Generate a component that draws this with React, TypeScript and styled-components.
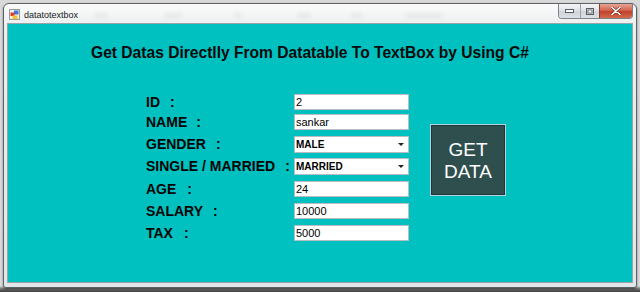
import React from "react";
import styled, { createGlobalStyle } from "styled-components";

const Global = createGlobalStyle`
  html, body { margin: 0; padding: 0; }
  body {
    width: 640px;
    height: 292px;
    overflow: hidden;
    background: linear-gradient(#d9d9d9 0, #d9d9d9 286px, #6d6d6d 289px, #3d3d3d 292px);
    font-family: "Liberation Sans", Arial, sans-serif;
  }
`;

const Window = styled.div`
  margin: 3px 3px 0 3px;
  width: 634px;
  height: 285px;
  box-sizing: border-box;
  border: 1px solid #5e6166;
  border-radius: 6px 6px 3px 3px;
  background: linear-gradient(#fbfbfb 0, #eceeef 22px, #e3e6e8 100%);
  display: flex;
  flex-direction: column;
  box-shadow: 0 1px 2px rgba(0,0,0,0.5);
`;

const TitleBar = styled.div`
  height: 19px;
  display: flex;
  align-items: flex-start;
  padding-left: 5px;
`;

const AppIcon = styled.svg`
  width: 11px;
  height: 11px;
  margin-top: 5px;
  flex: none;
`;

const Title = styled.span`
  margin-left: 4px;
  margin-top: 6px;
  font-size: 9px;
  line-height: 11px;
  color: #1b1b1b;
`;

const Blur = styled.span<{ $w: number; $ml: number }>`
  width: ${(p) => p.$w}px;
  height: 5px;
  margin-left: ${(p) => p.$ml}px;
  margin-top: 9px;
  border-radius: 3px;
  background: rgba(120, 120, 120, 0.1);
  filter: blur(2px);
`;

const Caption = styled.div`
  margin-left: auto;
  margin-right: 3px;
  display: flex;
  height: 14px;
  border: 1px solid #7b8089;
  border-top: none;
  border-radius: 0 0 4px 4px;
  overflow: hidden;
`;

const CapBtn = styled.div<{ $w: number; $close?: boolean }>`
  width: ${(p) => p.$w}px;
  height: 14px;
  display: flex;
  align-items: center;
  justify-content: center;
  border-left: ${(p) => (p.$close ? "1px solid #8d3a2e" : "1px solid #9ea3aa")};
  &:first-child { border-left: none; }
  background: ${(p) =>
    p.$close
      ? "linear-gradient(#e8a595 0, #d4644f 45%, #c2412b 55%, #d36a4d 100%)"
      : "linear-gradient(#f4f5f7 0, #e1e4e8 45%, #cfd4da 55%, #dde1e5 100%)"};
`;

const Client = styled.div`
  flex: 1;
  margin: 0 3px 4px 3px;
  background: #00c0c0;
  border: 1px solid #9aa3a8;
  padding: 20px 0 0 83px;
`;

const Heading = styled.div`
  font-size: 15.6px;
  line-height: 17px;
  font-weight: 700;
  color: #0a0a0a;
`;

const Form = styled.div`
  margin-top: 33px;
  margin-left: 55px;
  display: grid;
  grid-template-columns: 148px 115px auto;
  grid-template-rows: 20px 22px 22px 23px 22px 22px 16px;
`;

const Label = styled.div<{ $row: number }>`
  grid-column: 1;
  grid-row: ${(p) => p.$row};
  display: flex;
  font-size: 14px;
  line-height: 18px;
  font-weight: 700;
  color: #050505;
  white-space: pre;
  margin-top: -1px;
`;

const Colon = styled.span<{ $gap: number }>`
  margin-left: ${(p) => p.$gap}px;
`;

const TextBox = styled.div<{ $row: number }>`
  grid-column: 2;
  grid-row: ${(p) => p.$row};
  align-self: start;
  box-sizing: border-box;
  height: 16px;
  background: #fff;
  border: 1px solid #b9bcc1;
  padding-left: 1px;
  font-size: 11px;
  line-height: 14px;
  color: #000;
`;

const ComboBox = styled(TextBox)`
  height: 17px;
  line-height: 15px;
  font-size: 10px;
  font-weight: 700;
  display: flex;
  align-items: center;
  justify-content: space-between;
  padding-right: 4px;
`;

const Arrow = styled.span`
  width: 0;
  height: 0;
  border-left: 3px solid transparent;
  border-right: 3px solid transparent;
  border-top: 3px solid #222;
`;

const GetButton = styled.div`
  grid-column: 3;
  grid-row: 1 / span 7;
  align-self: start;
  margin-top: 30px;
  margin-left: 21px;
  width: 76px;
  height: 72px;
  box-sizing: border-box;
  background: #2f4f4f;
  border: 1px solid #b3d2de;
  box-shadow: inset 0 0 0 1px #1f3838;
  display: flex;
  flex-direction: column;
  align-items: center;
  justify-content: center;
  padding-top: 2px;
  color: #fff;
  font-size: 19px;
  line-height: 22px;
`;

const fields: { label: string; gap: number; value: string; combo?: boolean }[] = [
  { label: "ID", gap: 10, value: "2" },
  { label: "NAME", gap: 9, value: "sankar" },
  { label: "GENDER", gap: 10, value: "MALE", combo: true },
  { label: "SINGLE / MARRIED", gap: 10, value: "MARRIED", combo: true },
  { label: "AGE", gap: 11, value: "24" },
  { label: "SALARY", gap: 10, value: "10000" },
  { label: "TAX", gap: 11, value: "5000" },
];

export default function App() {
  return (
    <>
      <Global />
      <Window>
        <TitleBar>
          <AppIcon viewBox="0 0 11 11">
            <rect x="0.5" y="0.5" width="10" height="10" fill="#f2f2f2" stroke="#9a9a9a" />
            <rect x="5" y="1.5" width="4.5" height="4" fill="#3d7bd9" />
            <rect x="1.5" y="3.5" width="4" height="3.5" fill="#e03a2a" />
            <rect x="3.5" y="6.5" width="5" height="3.5" fill="#f2c230" />
          </AppIcon>
          <Title>datatotextbox</Title>
          <Blur $w={14} $ml={16} />
          <Blur $w={18} $ml={56} />
          <Blur $w={8} $ml={52} />
          <Blur $w={14} $ml={55} />
          <Blur $w={12} $ml={40} />
          <Blur $w={38} $ml={42} />
          <Caption>
            <CapBtn $w={21}>
              <svg width="9" height="4" viewBox="0 0 9 4">
                <rect x="0.5" y="0.5" width="8" height="3" fill="#fff" stroke="#5a5f66" />
              </svg>
            </CapBtn>
            <CapBtn $w={18}>
              <svg width="8" height="7" viewBox="0 0 8 7">
                <rect x="0.5" y="0.5" width="7" height="6" fill="none" stroke="#5a5f66" />
                <rect x="2" y="2" width="4" height="3" fill="#fff" stroke="#5a5f66" strokeWidth="0.8" />
              </svg>
            </CapBtn>
            <CapBtn $w={32} $close>
              <svg width="10" height="8" viewBox="0 0 10 8">
                <path d="M1 0.5 L9 7.5 M9 0.5 L1 7.5" stroke="#4a1c14" strokeWidth="2.6" strokeLinecap="round" />
                <path d="M1 0.5 L9 7.5 M9 0.5 L1 7.5" stroke="#fff" strokeWidth="1.6" strokeLinecap="round" />
              </svg>
            </CapBtn>
          </Caption>
        </TitleBar>
        <Client>
          <Heading>Get Datas Directlly From Datatable To TextBox by Using C#</Heading>
          <Form>
            {fields.map((f, i) => (
              <React.Fragment key={f.label}>
                <Label $row={i + 1}>
                  {f.label}
                  <Colon $gap={f.gap}>:</Colon>
                </Label>
                {f.combo ? (
                  <ComboBox $row={i + 1}>
                    {f.value}
                    <Arrow />
                  </ComboBox>
                ) : (
                  <TextBox $row={i + 1}>{f.value}</TextBox>
                )}
              </React.Fragment>
            ))}
            <GetButton>
              <span>GET</span>
              <span>DATA</span>
            </GetButton>
          </Form>
        </Client>
      </Window>
    </>
  );
}
